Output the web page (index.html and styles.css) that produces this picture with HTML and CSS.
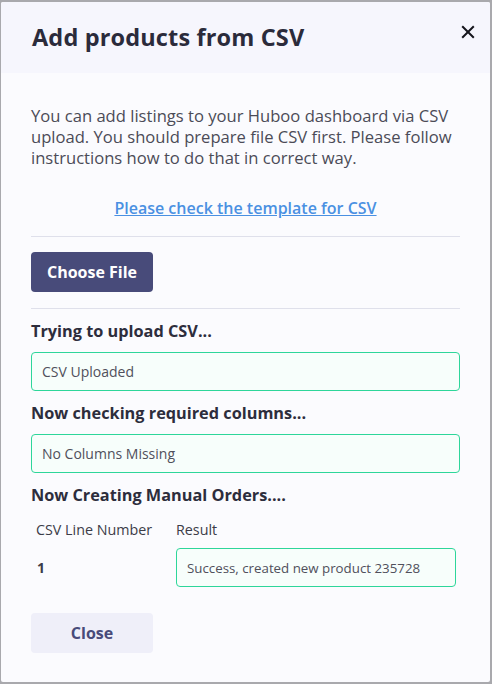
FILE: index.html
```html
<!DOCTYPE html>
<html>
<head>
<meta charset="utf-8">
<link rel="stylesheet" href="styles.css">
</head>
<body>
<div class="modal">
  <header class="modal-header">
    <h1 class="title">Add products from CSV</h1>
    <button class="close-x" aria-label="Close">
      <svg width="14" height="14" viewBox="0 0 14 14"><path d="M1.2 1.2 L12.8 12.8 M12.8 1.2 L1.2 12.8" stroke="#15151c" stroke-width="2"/></svg>
    </button>
  </header>
  <div class="modal-body">
    <p class="intro">You can add listings to your Huboo dashboard via CSV upload. You should prepare file CSV first. Please follow instructions how to do that in correct way.</p>
    <div class="link-row"><a class="template-link" href="#">Please check the template for CSV</a></div>
    <hr class="divider">
    <button class="btn btn-primary">Choose File</button>
    <hr class="divider divider-tight">
    <h2 class="step">Trying to upload CSV...</h2>
    <div class="status">CSV Uploaded</div>
    <h2 class="step">Now checking required columns...</h2>
    <div class="status">No Columns Missing</div>
    <h2 class="step">Now Creating Manual Orders....</h2>
    <div class="results">
      <div class="res-head res-head-first">CSV Line Number</div>
      <div class="res-head">Result</div>
      <div class="res-num">1</div>
      <div class="status res-status">Success, created new product 235728</div>
    </div>
    <button class="btn btn-secondary">Close</button>
  </div>
</div>
</body>
</html>
```
FILE: styles.css
```css
html, body {
  margin: 0;
  padding: 0;
}
body {
  background: #a9a9ad;
  width: 492px;
  height: 684px;
  padding: 2px 2px 2px 1px;
  box-sizing: border-box;
  font-family: "Open Sans", "Noto Sans", sans-serif;
}
.modal {
  background: #fbfbfe;
  height: 680px;
  border-radius: 2px;
  overflow: hidden;
}
.modal-header {
  background: #f6f6fd;
  height: 71px;
  display: flex;
  align-items: flex-start;
  justify-content: space-between;
  padding: 0 0 0 31px;
  box-sizing: border-box;
}
.title {
  margin: 19px 0 0;
  font-size: 23.5px;
  letter-spacing: 0.15px;
  font-weight: 700;
  color: #2b2b3b;
  line-height: 32px;
}
.close-x {
  background: none;
  border: 0;
  padding: 0;
  margin: 22px 14px 0 0;
  width: 16px;
  height: 16px;
  display: flex;
  align-items: center;
  justify-content: center;
}
.modal-body {
  padding: 32px 30px 0 30px;
}
.intro {
  margin: 0;
  font-size: 16.6px;
  line-height: 21px;
  color: #4b4b57;
}
.link-row {
  text-align: center;
  margin-top: 29px;
  line-height: 22px;
}
.template-link {
  color: #4a90e2;
  font-weight: 600;
  font-size: 16px;
  text-decoration: underline;
}
.divider {
  border: 0;
  border-top: 1px solid #dfe0eb;
  margin: 17px 0 15px;
}
.divider-tight {
  margin-top: 16px;
  margin-bottom: 11px;
}
.btn {
  font-family: "Open Sans", "Noto Sans", sans-serif;
  font-size: 16px;
  font-weight: 700;
  border: 0;
  border-radius: 4px;
  width: 122px;
  height: 40px;
  display: block;
  cursor: pointer;
}
.btn-primary {
  background: #484b7a;
  color: #ffffff;
}
.btn-secondary {
  background: #efeff9;
  color: #484b7a;
  margin-top: 26px;
}
.step {
  margin: 0;
  font-size: 16.3px;
  font-weight: 700;
  color: #2d2d3c;
  line-height: 22px;
}
.status {
  border: 1px solid #2ed69a;
  background: #f7fefb;
  border-radius: 4px;
  height: 39px;
  box-sizing: border-box;
  display: flex;
  align-items: center;
  padding: 0 10px;
  font-size: 14px;
  color: #50505c;
  margin: 10px 0 11px;
}
.results {
  display: grid;
  grid-template-columns: 145px 280px;
  row-gap: 8px;
  margin-top: 14px;
}
.res-head {
  font-size: 14.3px;
  color: #3c3c48;
  line-height: 20px;
}
.res-head-first {
  padding-left: 5px;
}
.res-num {
  font-size: 14px;
  font-weight: 700;
  color: #3c3c48;
  padding-left: 6px;
  display: flex;
  align-items: center;
}
.res-status {
  margin: 0;
  font-size: 13.3px;
}
```
